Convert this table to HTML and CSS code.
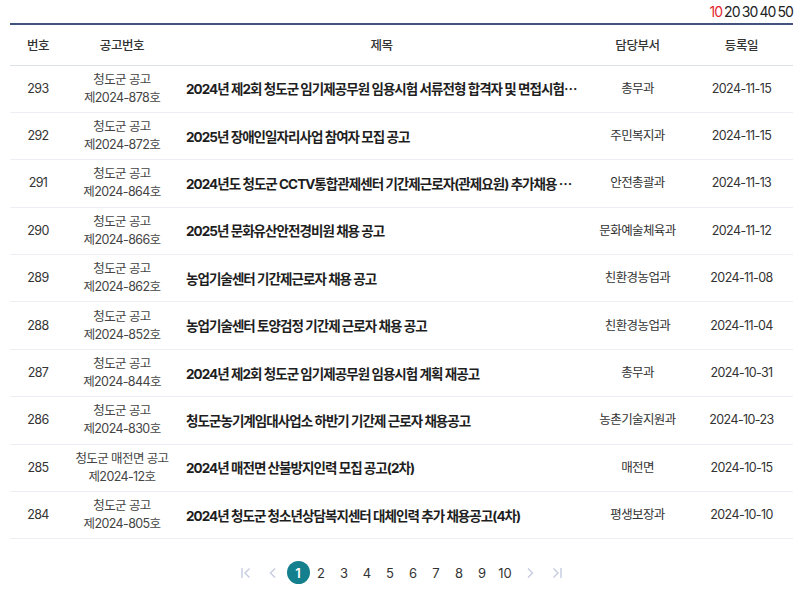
FILE: index.html
```html
<!DOCTYPE html>
<html lang="ko">
<head>
<meta charset="utf-8">
<link rel="stylesheet" href="styles.css">
</head>
<body>
<div class="wrap">
  <div class="perpage">
    <span class="on">10</span><span>20</span><span>30</span><span>40</span><span>50</span>
  </div>
  <table class="board">
    <colgroup>
      <col class="c-no"><col class="c-num"><col class="c-title"><col class="c-dept"><col class="c-date">
    </colgroup>
    <thead>
      <tr><th>번호</th><th>공고번호</th><th>제목</th><th>담당부서</th><th>등록일</th></tr>
    </thead>
    <tbody>
      <tr><td>293</td><td class="num">청도군 공고<br>제2024-878호</td><td class="title"><span class="clip"><span class="t">2024년 제2회 청도군 임기제공무원 임용시험 서류전형 합격자 및 면접시험 일정 공고</span></span></td><td>총무과</td><td>2024-11-15</td></tr>
      <tr><td>292</td><td class="num">청도군 공고<br>제2024-872호</td><td class="title"><span class="clip"><span class="t">2025년 장애인일자리사업 참여자 모집 공고</span></span></td><td>주민복지과</td><td>2024-11-15</td></tr>
      <tr><td>291</td><td class="num">청도군 공고<br>제2024-864호</td><td class="title"><span class="clip"><span class="t">2024년도 청도군 CCTV통합관제센터 기간제근로자(관제요원) 추가채용 공고</span></span></td><td>안전총괄과</td><td>2024-11-13</td></tr>
      <tr><td>290</td><td class="num">청도군 공고<br>제2024-866호</td><td class="title"><span class="clip"><span class="t">2025년 문화유산안전경비원 채용 공고</span></span></td><td>문화예술체육과</td><td>2024-11-12</td></tr>
      <tr><td>289</td><td class="num">청도군 공고<br>제2024-862호</td><td class="title"><span class="clip"><span class="t">농업기술센터 기간제근로자 채용 공고</span></span></td><td>친환경농업과</td><td>2024-11-08</td></tr>
      <tr><td>288</td><td class="num">청도군 공고<br>제2024-852호</td><td class="title"><span class="clip"><span class="t">농업기술센터 토양검정 기간제 근로자 채용 공고</span></span></td><td>친환경농업과</td><td>2024-11-04</td></tr>
      <tr><td>287</td><td class="num">청도군 공고<br>제2024-844호</td><td class="title"><span class="clip"><span class="t">2024년 제2회 청도군 임기제공무원 임용시험 계획 재공고</span></span></td><td>총무과</td><td>2024-10-31</td></tr>
      <tr><td>286</td><td class="num">청도군 공고<br>제2024-830호</td><td class="title"><span class="clip"><span class="t">청도군농기계임대사업소 하반기 기간제 근로자 채용공고</span></span></td><td>농촌기술지원과</td><td>2024-10-23</td></tr>
      <tr><td>285</td><td class="num">청도군 매전면 공고<br>제2024-12호</td><td class="title"><span class="clip"><span class="t">2024년 매전면 산불방지인력 모집 공고(2차)</span></span></td><td>매전면</td><td>2024-10-15</td></tr>
      <tr><td>284</td><td class="num">청도군 공고<br>제2024-805호</td><td class="title"><span class="clip"><span class="t">2024년 청도군 청소년상담복지센터 대체인력 추가 채용공고(4차)</span></span></td><td>평생보장과</td><td>2024-10-10</td></tr>
    </tbody>
  </table>
  <nav class="paging">
    <a class="arrow" href="#"><svg width="12" height="12" viewBox="0 0 12 12"><path d="M2 1v10M9.5 1.5L5 6l4.5 4.5" fill="none" stroke="currentColor" stroke-width="1.4"/></svg></a>
    <a class="arrow" href="#"><svg width="12" height="12" viewBox="0 0 12 12"><path d="M8 1.5L3.5 6 8 10.5" fill="none" stroke="currentColor" stroke-width="1.4"/></svg></a>
    <a class="pg active" href="#">1</a>
    <a class="pg" href="#">2</a>
    <a class="pg" href="#">3</a>
    <a class="pg" href="#">4</a>
    <a class="pg" href="#">5</a>
    <a class="pg" href="#">6</a>
    <a class="pg" href="#">7</a>
    <a class="pg" href="#">8</a>
    <a class="pg" href="#">9</a>
    <a class="pg" href="#">10</a>
    <a class="arrow" href="#"><svg width="12" height="12" viewBox="0 0 12 12"><path d="M4 1.5L8.5 6 4 10.5" fill="none" stroke="currentColor" stroke-width="1.4"/></svg></a>
    <a class="arrow" href="#"><svg width="12" height="12" viewBox="0 0 12 12"><path d="M2.5 1.5L7 6l-4.5 4.5M10 1v10" fill="none" stroke="currentColor" stroke-width="1.4"/></svg></a>
  </nav>
</div>
</body>
</html>
```

FILE: styles.css
```css
* { box-sizing: border-box; }
html, body { margin: 0; padding: 0; background: #fff; }
body {
  font-family: "Inter", "Noto Sans CJK KR", sans-serif;
  color: #222;
  font-size: 13px;
}
.wrap { padding: 0 7px 0 10px; }
.perpage {
  display: flex;
  justify-content: flex-end;
  gap: 2px;
  height: 23px;
  padding-top: 3px;
  font-size: 14px;
  line-height: 18px;
  color: #222;
  letter-spacing: -0.9px;
}
.perpage .on { color: #e5262e; }
.board {
  width: 783px;
  table-layout: fixed;
  border-collapse: collapse;
  border-top: 2px solid #42547e;
}
.c-no { width: 56px; }
.c-num { width: 112px; }
.c-title { width: 407px; }
.c-dept { width: 105px; }
.c-date { width: 103px; }
.board th {
  height: 41px;
  font-weight: 500;
  font-size: 12.5px;
  letter-spacing: -0.4px;
  color: #333;
  text-align: center;
  border-bottom: 1px solid #dde1ea;
  padding: 0;
}
.board td {
  height: 47.4px;
  padding: 0;
  text-align: center;
  border-bottom: 1px solid #eceef3;
  color: #333;
  font-size: 12.5px;
  letter-spacing: -0.6px;
  line-height: 18px;
}
.board td.num { color: #444; }
.board td.title {
  text-align: left;
  padding: 0 7px 0 8px;
}
.board td.title .clip {
  display: block;
  white-space: nowrap;
  overflow: hidden;
  text-overflow: ellipsis;
  font-family: "Noto Sans CJK JP", sans-serif;
  font-size: 13.5px;
  font-weight: 700;
  letter-spacing: -0.95px;
  color: #1e1e1e;
}
.board td.title .t {
  font-family: "Inter", "Noto Sans CJK KR", sans-serif;
}
.paging {
  display: flex;
  justify-content: center;
  align-items: center;
  margin-top: 22px;
  height: 23px;
}
.paging a {
  text-decoration: none;
  display: flex;
  align-items: center;
  justify-content: center;
  height: 23px;
}
.paging .arrow {
  width: 27px;
  color: #c5cce0;
}
.paging .pg {
  width: 23px;
  font-size: 13px;
  color: #333;
}
.paging .pg.active {
  background: #14808d;
  color: #fff;
  border-radius: 50%;
  font-weight: 600;
}
```
